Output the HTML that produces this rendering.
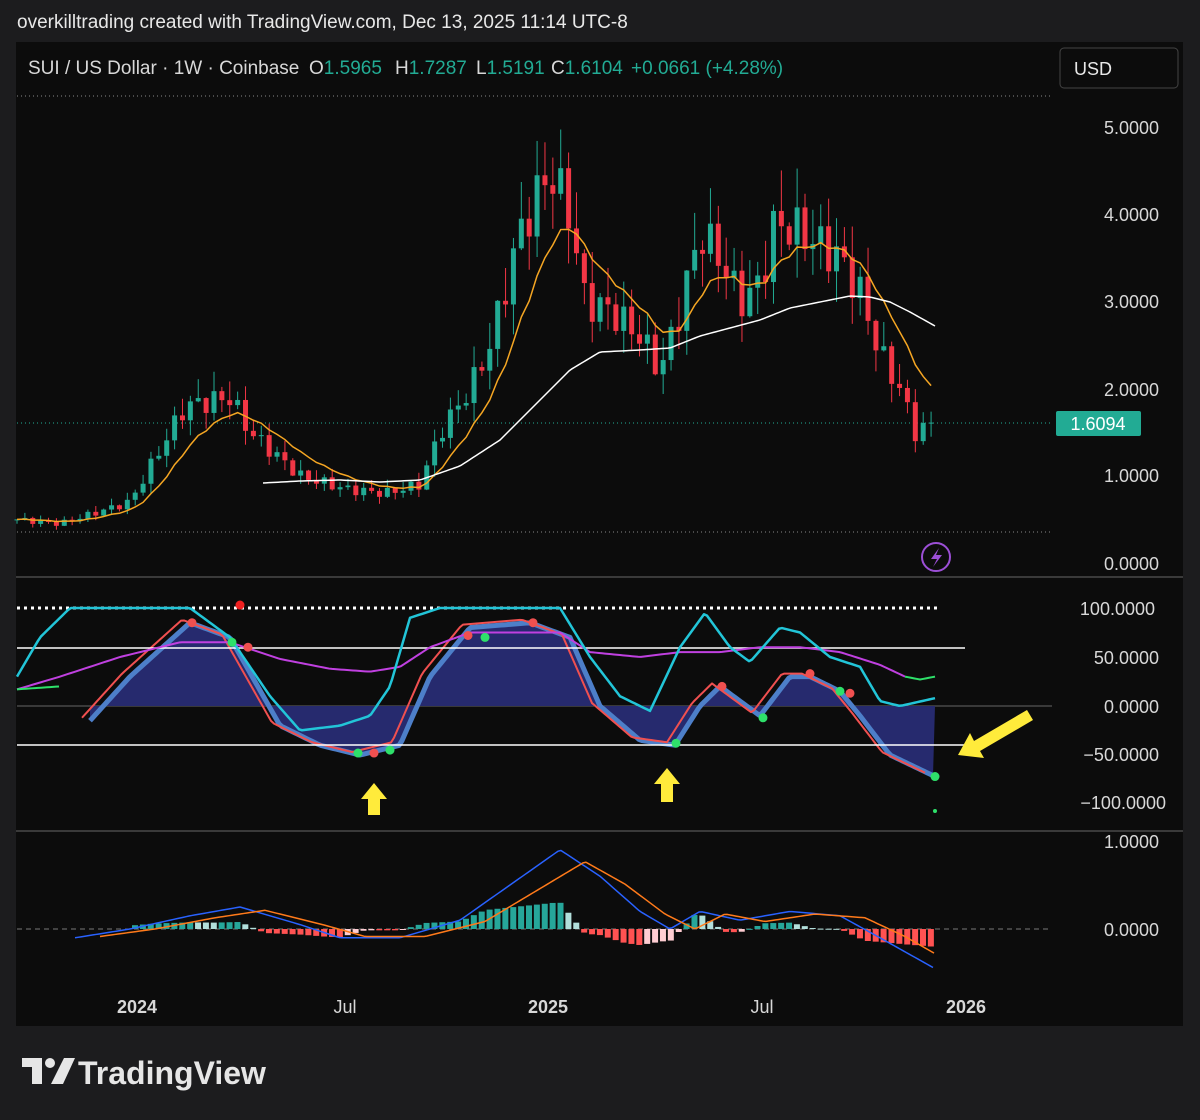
<!DOCTYPE html>
<html><head><meta charset="utf-8">
<style>
html,body{margin:0;padding:0;background:#1c1c1e;width:1200px;height:1120px;overflow:hidden;font-family:"Liberation Sans",sans-serif}
.t{position:absolute;white-space:nowrap}
</style></head>
<body>
<div class="t" style="left:17px;top:12px;font-size:19px;color:#e8e8e8">overkilltrading created with TradingView.com, Dec 13, 2025 11:14 UTC-8</div>
<svg id="s" width="1200" height="1120" style="position:absolute;left:0;top:0" font-family="Liberation Sans, sans-serif">
<rect x="16" y="42" width="1167" height="984" fill="#0c0c0c"/>
<line x1="16" y1="577" x2="1183" y2="577" stroke="#3a3a3a" stroke-width="2"/>
<line x1="16" y1="831" x2="1183" y2="831" stroke="#3a3a3a" stroke-width="2"/>
<line x1="17" y1="96" x2="1052" y2="96" stroke="#888" stroke-dasharray="1 3"/>
<line x1="17" y1="532" x2="1052" y2="532" stroke="#888" stroke-dasharray="1 3"/>
<line x1="17" y1="423" x2="1052" y2="423" stroke="#22ab94" stroke-dasharray="1 3"/>
<line x1="17" y1="929" x2="1052" y2="929" stroke="#777" stroke-dasharray="5 4"/>
<g id="g"></g>
<g fill="#d8d8d8" font-size="18" text-anchor="end">
<text x="1159" y="134">5.0000</text><text x="1159" y="221">4.0000</text><text x="1159" y="308">3.0000</text>
<text x="1159" y="396">2.0000</text><text x="1159" y="482">1.0000</text><text x="1159" y="570">0.0000</text>
<text x="1155" y="615">100.0000</text><text x="1159" y="664">50.0000</text><text x="1159" y="713">0.0000</text>
<text x="1159" y="761">−50.0000</text><text x="1166" y="809">−100.0000</text>
<text x="1159" y="848">1.0000</text><text x="1159" y="936">0.0000</text>
</g>
<rect x="1056" y="411" width="85" height="25" rx="2" fill="#22ab94"/>
<text x="1098" y="430" fill="#fff" font-size="18" text-anchor="middle">1.6094</text>
<rect x="1060" y="48" width="118" height="40" rx="4" fill="#0c0c0c" stroke="#444"/>
<text x="1074" y="75" fill="#e8e8e8" font-size="18">USD</text>
<g font-size="19" fill="#d8d8d8">
<text x="28" y="74">SUI / US Dollar · 1W · Coinbase</text>
<text x="309" y="74">O<tspan fill="#22ab94">1.5965</tspan></text>
<text x="395" y="74">H<tspan fill="#22ab94">1.7287</tspan></text>
<text x="476" y="74">L<tspan fill="#22ab94">1.5191</tspan></text>
<text x="551" y="74">C<tspan fill="#22ab94">1.6104</tspan></text>
<text x="631" y="74" fill="#22ab94">+0.0661 (+4.28%)</text>
</g>
<g fill="#d8d8d8" font-size="18" font-weight="bold" text-anchor="middle">
<text x="137" y="1013">2024</text><text x="345" y="1013" font-weight="normal">Jul</text><text x="548" y="1013">2025</text><text x="762" y="1013" font-weight="normal">Jul</text><text x="966" y="1013">2026</text>
</g>
<circle cx="936" cy="557" r="14" fill="none" stroke="#9c4fd6" stroke-width="2"/>
<path d="M939 548 L931 559 L937 559 L933 567 L942 555 L936 555 Z" fill="#9c4fd6"/>
<g fill="#ffeb3b">
<path d="M374 783 L387 799 L380 799 L380 815 L368 815 L368 799 L361 799 Z"/>
<path d="M667 768 L680 784 L673 784 L673 802 L661 802 L661 784 L654 784 Z"/>
<path d="M958 755 L970 733 L974 741 L1027 710 L1033 720 L980 751 L984 758 Z"/>
</g>
<g transform="translate(22,1058)" fill="#e6e6e6">
<path d="M0 0 H20 V26 H10 V9 H0 Z"/><circle cx="28" cy="5" r="5"/><path d="M42 0 H53 L41 26 H29 Z"/>
<text x="56" y="26" font-size="32" font-weight="bold">TradingView</text>
</g>
</svg>
<script>
function f(p,x){if(x<=p[0][0])return p[0][1];for(let i=1;i<p.length;i++){if(x<=p[i][0]){let a=p[i-1],b=p[i];return a[1]+(b[1]-a[1])*(x-a[0])/(b[0]-a[0]);}}return p[p.length-1][1];}
const g=document.getElementById('g');let h='';
const P=[[17,0.5],[60,0.45],[130,0.7],[185,1.8],[230,1.9],[250,1.5],[300,1.0],[345,0.85],[385,0.8],[420,0.9],[440,1.5],[470,2.0],[490,2.5],[520,3.8],[550,4.5],[570,4.0],[585,3.0],[610,2.9],[640,2.6],[660,2.2],[680,2.9],[700,3.8],[720,3.5],[740,3.0],[760,3.2],[775,3.9],[800,3.8],[840,3.5],[860,3.1],[880,2.4],[900,2.0],[915,1.5],[933,1.6]];
const yp=p=>563-87.2*p;
let prev=0.5,closes=[],xs=[];
for(let i=0;;i++){let x=17+i*7.88;if(x>934)break;let b=f(P,x);let c=b*(1+Math.sin(i*2.3)*0.07);if(x>928)c=1.61;let o=prev;let hi=Math.max(o,c)+Math.abs(Math.sin(i*1.7))*0.12*b,lo=Math.min(o,c)-Math.abs(Math.cos(i*1.3))*0.1*b;
let col=c>=o?'#22ab94':'#f23645';h+=`<line x1="${x}" x2="${x}" y1="${yp(hi)}" y2="${yp(lo)}" stroke="${col}"/><rect x="${x-2.5}" y="${yp(Math.max(o,c))}" width="5" height="${Math.max(1,87.2*Math.abs(c-o))}" fill="${col}"/>`;prev=c;closes.push(c);xs.push(x);}
let e=closes[0],pe='';closes.forEach((c,i)=>{e=e+(c-e)*0.2;pe+=(i?'L':'M')+xs[i]+' '+yp(e)});h+=`<path d="${pe}" fill="none" stroke="#f5a623" stroke-width="1.5"/>`;
function line(pts,col,w,fn,step){let d='';for(let x=pts[0][0];x<=pts[pts.length-1][0];x+=step||3)d+=(d?'L':'M')+x+' '+fn(f(pts,x));return `<path d="${d}" fill="none" stroke="${col}" stroke-width="${w}" stroke-linejoin="round"/>`;}
const W=[[263,483],[300,481],[340,480],[380,482],[420,480],[460,466],[500,440],[540,400],[570,370],[600,352],[640,350],[670,348],[700,336],[730,328],[760,320],[790,308],[820,302],[850,296],[870,297],[890,302],[910,312],[935,326]];
{let d='';for(let x=263;x<=935;x+=3)d+=(d?'L':'M')+x+' '+f(W,x);h+=`<path d="${d}" fill="none" stroke="#fff" stroke-width="1.5"/>`;}
const yo=v=>706-0.98*v;
h+=`<line x1="17" x2="1052" y1="706" y2="706" stroke="#666"/>`;
const A=[[90,-15],[130,30],[190,85],[230,70],[280,-20],[320,-40],[360,-50],[400,-40],[430,30],[470,80],[530,85],[570,70],[600,0],[640,-35],[675,-40],[700,0],[720,20],[740,5],[760,-10],[790,30],[810,30],[840,15],[860,-10],[890,-50],[935,-72]];
let da='M90 706';for(let x=90;x<=935;x+=3)da+='L'+x+' '+yo(f(A,x));da+='L935 706Z';h+=`<path d="${da}" fill="#262a6e"/>`;
h+=line(A,'#4d7fc9',5,yo);
h+=line(A.map(p=>[p[0]-8,p[1]+3]),'#f05050',2,yo);
h+=`<line x1="17" x2="965" y1="648" y2="648" stroke="#fff" stroke-width="1.5"/><line x1="17" x2="965" y1="745" y2="745" stroke="#fff" stroke-width="1.5"/><line x1="17" x2="940" y1="608" y2="608" stroke="#fff" stroke-width="3" stroke-dasharray="3 4"/>`;
const M=[[17,17],[60,30],[120,50],[180,65],[230,65],[280,48],[330,38],[370,35],[400,40],[430,60],[470,75],[560,75],[590,55],[640,50],[680,55],[720,55],[760,60],[800,60],[840,55],[880,42],[905,30]];
h+=line(M,'#c040e0',2,yo);h+=line([[17,17],[60,20]],'#2ee06a',2,yo);h+=line([[905,30],[920,27],[935,30]],'#2ee06a',2,yo);
const C=[[17,30],[40,70],[70,100],[190,100],[230,70],[270,10],[300,-25],[340,-20],[370,-10],[390,20],[410,90],[440,100],[560,100],[590,50],[620,10],[650,-5],[680,60],[705,95],[730,60],[750,45],[780,80],[800,75],[830,50],[860,40],[880,5],[900,0],[935,8]];
h+=line(C,'#22c5d8',2.5,yo);
[[358,-48,'#2ee06a'],[374,-48,'#f05050'],[390,-45,'#2ee06a'],[232,65,'#2ee06a'],[248,60,'#f05050'],[192,85,'#f05050'],[468,72,'#f05050'],[485,70,'#2ee06a'],[533,85,'#f05050'],[676,-38,'#2ee06a'],[722,20,'#f05050'],[763,-12,'#2ee06a'],[810,33,'#f05050'],[840,15,'#2ee06a'],[850,13,'#f05050'],[935,-72,'#2ee06a'],[240,103,'#f02020']].forEach(d=>h+=`<circle cx="${d[0]}" cy="${yo(d[1])}" r="4.5" fill="${d[2]}"/>`);
h+=`<circle cx="935" cy="811" r="2" fill="#2ee06a"/>`;
const ym=v=>929-88*v;
const B=[[75,-0.1],[130,0],[190,0.15],[240,0.25],[300,0.05],[340,-0.1],[400,-0.1],[460,0.1],[510,0.5],[560,0.9],[600,0.6],[640,0.2],[670,0],[700,0.2],[740,0.1],[790,0.2],[840,0.15],[880,-0.1],[935,-0.45]];
const S=B.map(p=>[p[0]+25,p[1]*0.85]);S.unshift([130,-0.05]);
let pb=null;for(let x=135;x<=935;x+=7.88){let d=f(B,x)-f(S,x);let dd=(d-(pb===null?d:pb));pb=d;let col=d>=0?(dd>=0?'#26a69a':'#b2dfdb'):(dd<=0?'#ff5252':'#ffcdd2');h+=`<rect x="${x-3}" y="${Math.min(929,ym(d))}" width="6" height="${Math.max(1,Math.abs(88*d))}" fill="${col}"/>`;}
h+=line(B,'#2962ff',1.5,ym);h+=line(S.slice(1).concat([[935,-0.28]]).filter(p=>p[0]<=935),'#ff7a1a',1.5,ym);
g.innerHTML=h;
</script>
</body></html>
